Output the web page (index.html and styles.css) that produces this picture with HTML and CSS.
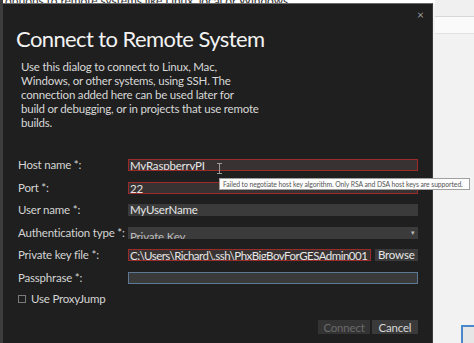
FILE: index.html
```html
<!DOCTYPE html>
<html>
<head>
<meta charset="utf-8">
<link rel="stylesheet" href="styles.css">
</head>
<body>
<div class="page">
  <div class="backdrop">
    <div class="bg-top">options to remote systems like Linux, local or Windows.</div>
    <div class="bg-right">
      <div class="bg-band1"></div>
      <div class="bg-band2"></div>
    </div>
    <div class="bg-box"></div>
  </div>

  <div class="dialog">
    <div class="close">×</div>
    <h1 class="title">Connect to Remote System</h1>
    <p class="desc">Use this dialog to connect to Linux, Mac,<br>Windows, or other systems, using SSH. The<br>connection added here can be used later for<br>build or debugging, or in projects that use remote<br>builds.</p>

    <div class="form">
      <div class="label">Host name *:</div>
      <div class="field err"><span class="val">MyRaspberryPI</span></div>

      <div class="label">Port *:</div>
      <div class="field err"><span class="val">22</span></div>

      <div class="label">User name *:</div>
      <div class="field"><span class="val">MyUserName</span></div>

      <div class="label">Authentication type *:</div>
      <div class="field select"><span class="val low">Private Key</span><span class="arrow">▾</span></div>

      <div class="label">Private key file *:</div>
      <div class="keyrow">
        <div class="field err key"><span class="val tight">C:\Users\Richard\.ssh\PhxBigBoyForGESAdmin001</span></div>
        <div class="btn browse"><span class="val">Browse</span></div>
      </div>

      <div class="label">Passphrase *:</div>
      <div class="field focus"></div>
    </div>

    <div class="check"><span class="box"></span><span>Use ProxyJump</span></div>

    <div class="actions">
      <div class="btn disabled">Connect</div>
      <div class="btn">Cancel</div>
    </div>

    <svg class="ibeam" width="7" height="11" viewBox="0 0 7 11"><path d="M1 0.5h5M1 10.5h5M3.5 0.5v10" stroke="#9a9a9a" stroke-width="1" fill="none"/></svg>
    <div class="tooltip">Failed to negotiate host key algorithm. Only RSA and DSA host keys are supported.</div>
  </div>
</div>
</body>
</html>
```

FILE: styles.css
```css
* { box-sizing: border-box; }
html, body { margin: 0; padding: 0; }
body { width: 474px; height: 343px; overflow: hidden; background: #f2f2f2; font-family: Lato, "Open Sans", sans-serif; }

.page { position: relative; width: 474px; height: 343px; overflow: hidden; background: #f2f2f2; }

.backdrop { position: absolute; inset: 0; background: #f2f2f2; border-left: 3px solid #3d3d3d; }
.bg-top { height: 4px; background: #fff; overflow: hidden; font-size: 12px; line-height: 2px; color: #333; padding-left: 2px; letter-spacing: -0.1px; }
.bg-right { position: absolute; left: 432px; top: 0; right: 0; }
.bg-band1 { height: 17px; background: #f0f0f0; border-bottom: 1px solid #d6d6d6; }
.bg-band2 { height: 17px; background: #fafafa; border-bottom: 1px solid #e2e2e2; }
.bg-box { position: absolute; left: 458px; top: 325px; width: 30px; height: 30px; border: 2px solid #4a88cc; background: #e6e6e6; }

.dialog {
  position: absolute; left: 3px; top: 3px; width: 430px; height: 345px;
  background: #1f1f1f; border-top: 1px solid #6a6a6a; border-right: 1px solid #3a3a3a;
  color: #d4d4d4; padding: 0;
}
.close { position: absolute; left: 414px; top: 4px; font-size: 12px; color: #9a9a9a; line-height: 14px; }
.title { margin: 0; padding: 20px 0 0 13px; font-weight: 400; font-size: 22px; line-height: 30px; color: #f2f2f2; letter-spacing: -0.6px; }
.desc { margin: 0; padding: 6px 0 0 18px; font-size: 11.5px; line-height: 14px; color: #d8d8d8; letter-spacing: -0.2px; }

.form {
  display: grid; grid-template-columns: 110px 290px; row-gap: 8.6px; align-items: center;
  margin-top: 28px; padding-left: 15px;
}
.label { font-size: 11.5px; line-height: 14px; color: #d4d4d4; white-space: nowrap; letter-spacing: -0.2px; }
.field { position: relative; height: 12px; background: #3b3b3b; overflow: hidden; padding-left: 2px; }
.field.err { border: 1px solid #9b2a2a; background: #383232; padding-left: 1px; }
.field.focus { border: 1px solid #5c7894; background: #3a3a3a; }
.val { display: block; font-size: 11.5px; line-height: 14px; margin-top: -1px; color: #e6e6e6; white-space: nowrap; letter-spacing: -0.2px; }
.val.tight { letter-spacing: -0.52px; }
.val.low { margin-top: 3px; color: #bdbdbd; }
.select .arrow { position: absolute; right: 3px; top: 0; font-size: 7px; line-height: 10px; color: #bbb; }
.keyrow { display: flex; gap: 4px; }
.field.key { width: 243px; flex: none; }
.btn { height: 12px; background: #3a3a3a; color: #d8d8d8; overflow: hidden; }
.browse { width: 43px; padding-left: 3px; }

.check { display: flex; align-items: center; gap: 5px; margin-top: 7px; padding-left: 15px; font-size: 11.5px; line-height: 14px; letter-spacing: -0.2px; }
.check .box { width: 8px; height: 8px; border: 1px solid #7a7a7a; }

.actions { display: flex; justify-content: flex-end; gap: 2px; margin-top: 14px; padding-right: 14px; }
.actions .btn { height: 14px; padding: 1px 4px 0; font-size: 11.5px; line-height: 14px; text-align: center; letter-spacing: -0.2px; }
.actions .btn:first-child { width: 52px; }
.actions .btn:last-child { width: 46px; }
.btn.disabled { background: #333; color: #6a6a6a; }

.ibeam { position: absolute; left: 213px; top: 159px; }
.tooltip {
  position: absolute; left: 216px; top: 174px; width: 251px; height: 12px;
  background: #fdfdfd; border: 1px solid #a0a0a0; color: #555;
  font-size: 6.8px; line-height: 10px; padding-left: 3px; white-space: nowrap; overflow: hidden; letter-spacing: -0.07px;
}
```
